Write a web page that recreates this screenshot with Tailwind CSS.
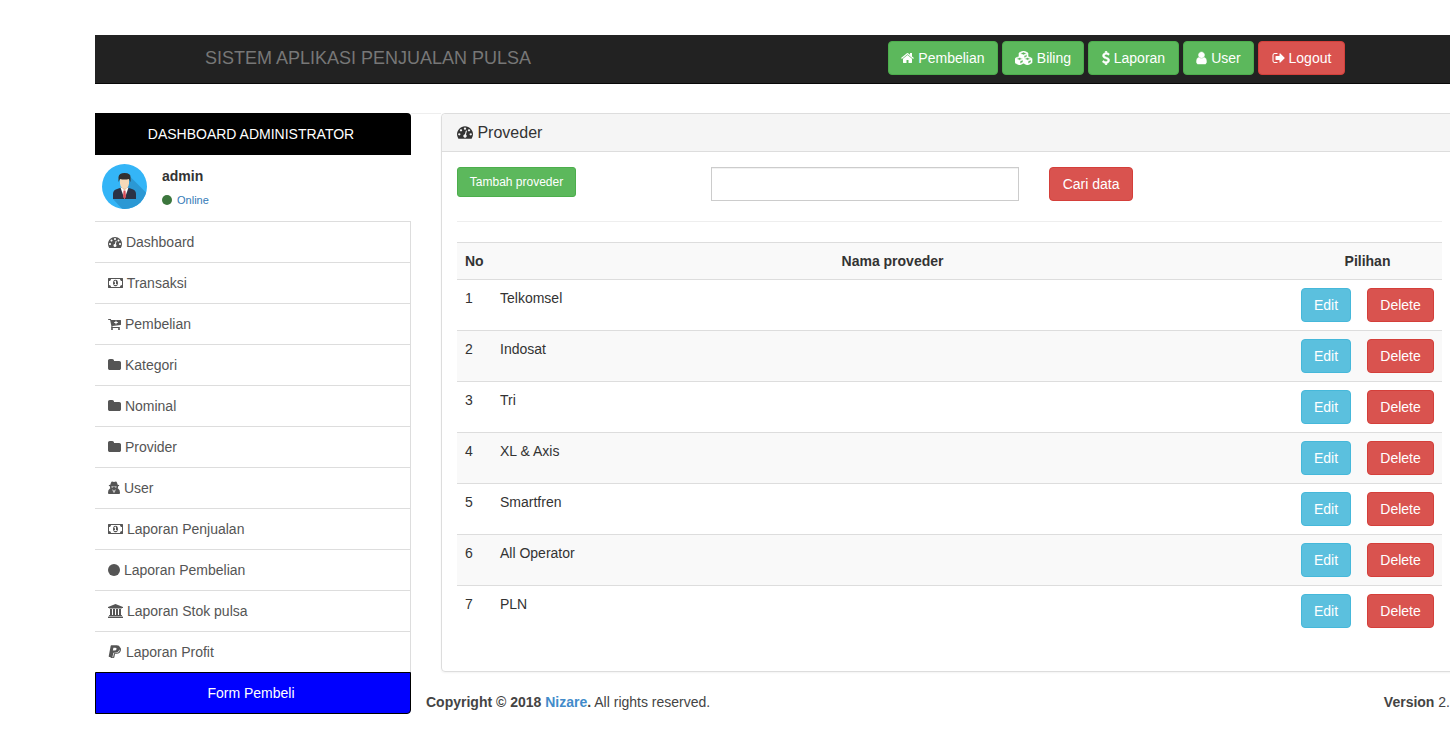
<!DOCTYPE html>
<html lang="id">
  <head>
    <meta charset="UTF-8" />
    <meta name="viewport" content="width=device-width, initial-scale=1.0" />
    <script src="https://cdn.jsdelivr.net/npm/@tailwindcss/browser@4"></script>
    <title>Sistem Aplikasi Penjualan Pulsa</title>
  </head>
  <body
    class="overflow-x-hidden bg-white pt-[35px] pl-[95px] font-['Liberation_Sans',Arial,sans-serif] text-[14px] leading-5 text-[#333]">
    <!-- icons -->
    <svg class="hidden" aria-hidden="true">
      <symbol id="home" viewBox="64 0 1664 1792"><path d="M1472 992v480q0 26-19 45t-45 19h-384v-384h-256v384h-384q-26 0-45-19t-19-45v-480q0-1 .5-3t.5-3l575-474 575 474q1 2 1 6zm223-69l-62 74q-8 9-21 11h-3q-13 0-21-7l-692-577-692 577q-12 8-24 7-13-2-21-11l-62-74q-8-10-7-23.5t11-21.5l719-599q32-26 76-26t76 26l244 204v-195q0-14 9-23t23-9h192q14 0 23 9t9 23v408l219 182q10 8 11 21.5t-7 23.5z" /></symbol>
      <symbol id="cubes" viewBox="0 0 2304 1792"><path d="M640 1632l384-192v-314l-384 164v342zm-64-454l404-173-404-173-404 173zm1088 454l384-192v-314l-384 164v342zm-64-454l404-173-404-173-404 173zm-448-293l384-165v-266l-384 164v267zm-64-379l441-189-441-189-441 189zm1088 518v416q0 36-19 67t-52 47l-448 224q-25 14-57 14t-57-14l-448-224q-4-2-7-4-2 2-7 4l-448 224q-25 14-57 14t-57-14l-448-224q-33-16-52-47t-19-67v-416q0-38 21.5-70t56.5-48l434-186v-400q0-38 21.5-70t56.5-48l448-192q23-10 50-10t50 10l448 192q35 16 56.5 48t21.5 70v400l434 186q36 16 57 48t21 70z" /></symbol>
      <symbol id="dollar" viewBox="384 0 1024 1792"><path d="M1362 1185q0 153-99.5 263.5t-258.5 136.5v175q0 14-9 23t-23 9h-135q-13 0-22.5-9.5t-9.5-22.5v-175q-66-9-127.5-31t-101.5-44.5-74-48-46.5-37.5-17.5-18q-17-21-2-41l103-135q7-10 23-12 15-2 24 9l2 2q113 99 243 125 37 8 74 8 81 0 142.5-43t61.5-122q0-28-15-53t-33.5-42-58.5-37.5-66-32-80-32.5q-39-16-61.5-25t-61.5-26.5-62.5-31-56.5-35.5-53.5-42.5-43.5-49-35.5-58-21-66.5-8.5-78q0-138 98-242t255-134v-180q0-13 9.5-22.5t22.5-9.5h135q14 0 23 9t9 23v176q57 6 110.5 23t87 33.5 63.5 37.5 39 29 15 14q17 18 5 38l-81 146q-8 15-23 16-14 3-27-7-3-3-14.5-12t-39-26.5-58.5-32-74.5-26-85.5-11.5q-95 0-155 43t-60 111q0 26 8.5 48t29.5 41.5 39.5 33 56 31 60.5 27 70 27.5q53 20 81 31.5t76 35 75.5 42.5 62 50 53 63.5 31.5 76.5 13 94z" /></symbol>
      <symbol id="user" viewBox="256 0 1280 1792"><path d="M1536 1399q0 109-62.5 187t-150.5 78h-854q-88 0-150.5-78t-62.5-187q0-85 8.5-160.5t31.5-152 58.5-131 94-89 134.5-34.5q131 128 313 128t313-128q76 0 134.5 34.5t94 89 58.5 131 31.5 152 8.5 160.5zm-256-887q0 159-112.5 271.5t-271.5 112.5-271.5-112.5-112.5-271.5 112.5-271.5 271.5-112.5 271.5 112.5 112.5 271.5z" /></symbol>
      <symbol id="sign-out" viewBox="0 0 1664 1792"><path d="M704 1440q0 4 1 20t.5 26.5-3 23.5-10 19.5-20.5 6.5h-320q-119 0-203.5-84.5t-84.5-203.5v-704q0-119 84.5-203.5t203.5-84.5h320q13 0 22.5 9.5t9.5 22.5q0 4 1 20t.5 26.5-3 23.5-10 19.5-20.5 6.5h-320q-66 0-113 47t-47 113v704q0 66 47 113t113 47h312l11.5 1 11.5 3 8 5.5 7 9 2 13.5zm928-544q0 26-19 45l-544 544q-19 19-45 19t-45-19-19-45v-288h-448q-26 0-45-19t-19-45v-384q0-26 19-45t45-19h448v-288q0-26 19-45t45-19 45 19l544 544q19 19 19 45z" /></symbol>
      <symbol id="dashboard" viewBox="0 0 1792 1792"><path d="M384 1152q0-53-37.5-90.5t-90.5-37.5-90.5 37.5-37.5 90.5 37.5 90.5 90.5 37.5 90.5-37.5 37.5-90.5zm192-448q0-53-37.5-90.5t-90.5-37.5-90.5 37.5-37.5 90.5 37.5 90.5 90.5 37.5 90.5-37.5 37.5-90.5zm428 481l101-382q6-26-7.5-48.5t-38.5-29.5-48 6.5-30 39.5l-101 382q-60 5-107 43.5t-63 98.5q-20 77 20 146t117 89 146-20 89-117q16-60-6-117t-72-91zm660-33q0-53-37.5-90.5t-90.5-37.5-90.5 37.5-37.5 90.5 37.5 90.5 90.5 37.5 90.5-37.5 37.5-90.5zm-640-640q0-53-37.5-90.5t-90.5-37.5-90.5 37.5-37.5 90.5 37.5 90.5 90.5 37.5 90.5-37.5 37.5-90.5zm448 192q0-53-37.5-90.5t-90.5-37.5-90.5 37.5-37.5 90.5 37.5 90.5 90.5 37.5 90.5-37.5 37.5-90.5zm320 448q0 261-141 483-19 29-54 29h-1402q-35 0-54-29-141-221-141-483 0-182 71-348t191-286 286-191 348-71 348 71 286 191 191 286 71 348z" /></symbol>
      <symbol id="money" viewBox="0 0 1920 1792"><path d="M768 1152h384v-96h-128v-448h-114l-148 137 77 80q42-37 55-57h2v288h-128v96zm512-256q0 70-21 142t-59.5 134-101.5 101-138 39-138-39-101.5-101-59.5-134-21-142 21-142 59.5-134 101.5-101 138-39 138 39 101.5 101 59.5 134 21 142zm512 256v-512q-106 0-181-75t-75-181h-1152q0 106-75 181t-181 75v512q106 0 181 75t75 181h1152q0-106 75-181t181-75zm128-832v1152q0 26-19 45t-45 19h-1792q-26 0-45-19t-19-45v-1152q0-26 19-45t45-19h1792q26 0 45 19t19 45z" /></symbol>
      <symbol id="cart-plus" viewBox="0 0 1664 1792"><path d="M1280 704q0-26-19-45t-45-19h-128v-128q0-26-19-45t-45-19-45 19-19 45v128h-128q-26 0-45 19t-19 45 19 45 45 19h128v128q0 26 19 45t45 19 45-19 19-45v-128h128q26 0 45-19t19-45zm-640 832q0 53-37.5 90.5t-90.5 37.5-90.5-37.5-37.5-90.5 37.5-90.5 90.5-37.5 90.5 37.5 37.5 90.5zm896 0q0 53-37.5 90.5t-90.5 37.5-90.5-37.5-37.5-90.5 37.5-90.5 90.5-37.5 90.5 37.5 37.5 90.5zm128-1088v512q0 24-16 42.5t-41 21.5l-1044 122q1 7 4.5 21.5t6 26.5 2.5 22q0 16-24 64h920q26 0 45 19t19 45-19 45-45 19h-1024q-26 0-45-19t-19-45q0-14 11-39.5t29.5-59.5 20.5-38l-177-823h-204q-26 0-45-19t-19-45 19-45 45-19h256q16 0 28.5 6.5t20 15.5 13 24.5 7.5 26.5 5.5 29.5 4.5 25.5h1201q26 0 45 19t19 45z" /></symbol>
      <symbol id="folder" viewBox="64 0 1664 1792"><path d="M1728 608v704q0 92-66 158t-158 66h-1216q-92 0-158-66t-66-158v-960q0-92 66-158t158-66h320q92 0 158 66t66 158v32h672q92 0 158 66t66 158z" /></symbol>
      <symbol id="user-secret" viewBox="0 0 1536 1792"><path fill-rule="evenodd" d="M300 470C340 330 400 64 540 64q90 0 228 70 138-70 228-70c140 0 200 266 240 406q210 40 210 100 0 70-160 110 30 150-50 260l90 40q210 120 210 520v36q0 128-120 128H120Q0 1664 0 1536v-36q0-400 210-520l90-40q-80-110-50-260-160-40-160-110 0-60 210-100zM430 690q-10 100 80 130 150 20 200-80h116q50 100 200 80 90-30 80-130-338 40-676 0zM560 1060l130 500 40-290-50-120zM976 1060l-120 90-50 120 40 290z" /></symbol>
      <symbol id="circle" viewBox="0 0 1536 1792"><circle cx="768" cy="896" r="768" /></symbol>
      <symbol id="bank" viewBox="0 0 1920 1792"><path d="M960 0l960 384v128h-128q0 26-20.5 45t-48.5 19h-1526q-28 0-48.5-19t-20.5-45h-128v-128zm-704 640h256v768h128v-768h256v768h128v-768h256v768h128v-768h256v768h59q28 0 48.5 19t20.5 45v64h-1664v-64q0-26 20.5-45t48.5-19h59v-768zm1595 960q28 0 48.5 19t20.5 45v128h-1920v-128q0-26 20.5-45t48.5-19h1782z" /></symbol>
      <symbol id="paypal" viewBox="0 0 1792 1792"><path fill-rule="evenodd" d="M420 40h720q330 20 390 240 160 110 130 350-70 470-560 500H900l-80 400q-20 130-130 130H380q-70 0-60-80l10-60H160q-80 0-70-80L340 120q15-80 80-80zM690 340l-70 370h190q250 0 290-200 20-170-190-170zM1450 560q-120 400-580 420H690l-110 520-20 70h90l100-440q20-100 120-100h170q380 0 450-350 10-60-40-120z" /></symbol>
    </svg>

    <!-- navbar -->
    <nav
      class="flex items-center justify-between border-b border-[#080808] bg-[#222] pt-1.5 pr-[105px] pb-2 pl-[110px]">
      <a href="#" class="text-[18px] text-[#777]">SISTEM APLIKASI PENJUALAN PULSA</a>
      <div class="flex gap-1 text-center text-white">
        <a href="#" class="w-[110px] rounded border border-[#4cae4c] bg-[#5cb85c] py-1.5">
          <svg class="inline h-[14px] w-[13px] fill-current align-[-2px]"><use href="#home" /></svg>
          Pembelian
        </a>
        <a href="#" class="w-[82px] rounded border border-[#4cae4c] bg-[#5cb85c] py-1.5">
          <svg class="inline h-[14px] w-[18px] fill-current stroke-current stroke-[80] align-[-2px]"><use href="#cubes" /></svg>
          Biling
        </a>
        <a href="#" class="w-[91px] rounded border border-[#4cae4c] bg-[#5cb85c] py-1.5">
          <svg class="inline h-[14px] w-[8px] fill-current stroke-current stroke-[60] align-[-2px]"><use href="#dollar" /></svg>
          Laporan
        </a>
        <a href="#" class="w-[71px] rounded border border-[#4cae4c] bg-[#5cb85c] py-1.5">
          <svg class="inline h-[14px] w-[11px] fill-current stroke-current stroke-[60] align-[-2px]"><use href="#user" /></svg>
          User
        </a>
        <a href="#" class="w-[87px] rounded border border-[#d43f3a] bg-[#d9534f] py-1.5">
          <svg class="inline h-[14px] w-[13px] fill-current align-[-2px]"><use href="#sign-out" /></svg>
          Logout
        </a>
      </div>
    </nav>

    <div class="mt-[29px] flex items-start">
      <!-- sidebar -->
      <aside class="w-[316px] shrink-0">
        <h2 class="rounded-tr bg-black py-[11px] pr-1 text-center text-white">
          DASHBOARD ADMINISTRATOR
        </h2>
        <div class="flex gap-[15px] pt-[9px] pb-[11px] pl-[7px]">
          <svg class="size-[45px]" viewBox="0 0 90 90" role="img" aria-label="admin">
            <clipPath id="round"><circle cx="45" cy="45" r="45" /></clipPath>
            <g clip-path="url(#round)">
              <path fill="#34b5f7" d="M0 0h90v90H0z" />
              <path fill="#2b98d4" d="M55 24l40 40v31H45L22 70z" />
              <path fill="#2b3245" d="M22 70V60q0-8 8-10l9-3h12l9 3q8 2 8 10v10z" />
              <path fill="#fff" d="M37 47l8 23 8-23z" />
              <path fill="#e8c3a0" d="M40 40h10v8l-5 5-5-5z" />
              <path fill="#d8505a" d="M43 53h4l1 13-3 4-3-4z" />
              <path fill="#f6d9b8" d="M36 29h18v10q-1 10-9 10t-9-10z" />
              <path fill="#33302f" d="M33 36V26q1-8 12-8 13 0 12 9v9l-3-6q-9 2-18 0z" />
            </g>
          </svg>
          <div class="pt-0.5">
            <p class="font-bold">admin</p>
            <a href="#" class="block pt-1 text-[11px] leading-5 text-[#337ab7]">
              <svg class="mr-0.5 inline h-[12px] w-[10px] fill-[#3c763d] align-[-2px]"><use href="#circle" /></svg>
              Online
            </a>
          </div>
        </div>
        <ul class="divide-y divide-[#ddd] border-t border-r border-[#ddd] text-[#555]">
          <li><a href="#" class="block py-2.5 pl-[13px]"><svg class="inline h-[14px] w-[14px] fill-current align-[-2px]"><use href="#dashboard" /></svg> Dashboard</a></li>
          <li><a href="#" class="block py-2.5 pl-[13px]"><svg class="inline h-[14px] w-[15px] fill-current align-[-2px]"><use href="#money" /></svg> Transaksi</a></li>
          <li><a href="#" class="block py-2.5 pl-[13px]"><svg class="inline h-[14px] w-[13px] fill-current align-[-2px]"><use href="#cart-plus" /></svg> Pembelian</a></li>
          <li><a href="#" class="block py-2.5 pl-[13px]"><svg class="inline h-[14px] w-[13px] fill-current align-[-2px]"><use href="#folder" /></svg> Kategori</a></li>
          <li><a href="#" class="block py-2.5 pl-[13px]"><svg class="inline h-[14px] w-[13px] fill-current align-[-2px]"><use href="#folder" /></svg> Nominal</a></li>
          <li><a href="#" class="block py-2.5 pl-[13px]"><svg class="inline h-[14px] w-[13px] fill-current align-[-2px]"><use href="#folder" /></svg> Provider</a></li>
          <li><a href="#" class="block py-2.5 pl-[13px]"><svg class="inline h-[14px] w-[12px] fill-current align-[-2px]"><use href="#user-secret" /></svg> User</a></li>
          <li><a href="#" class="block py-2.5 pl-[13px]"><svg class="inline h-[14px] w-[15px] fill-current align-[-2px]"><use href="#money" /></svg> Laporan Penjualan</a></li>
          <li><a href="#" class="block py-2.5 pl-[13px]"><svg class="inline h-[14px] w-[12px] fill-current align-[-2px]"><use href="#circle" /></svg> Laporan Pembelian</a></li>
          <li><a href="#" class="block py-2.5 pl-[13px]"><svg class="inline h-[14px] w-[15px] fill-current align-[-2px]"><use href="#bank" /></svg> Laporan Stok pulsa</a></li>
          <li><a href="#" class="block py-2.5 pl-[13px]"><svg class="inline h-[14px] w-[14px] fill-current align-[-2px]"><use href="#paypal" /></svg> Laporan Profit</a></li>
        </ul>
        <a
          href="#"
          class="block rounded-br border border-black bg-[#00f] py-2.5 pr-1 text-center text-white">Form Pembeli</a>
      </aside>

      <div class="h-px w-[30px] shrink-0 bg-[#eee]"></div>

      <!-- content -->
      <div class="min-w-0 flex-1">
        <main class="-mr-2 rounded border border-[#ddd] shadow-xs">
          <h1
            class="rounded-t border-b border-[#ddd] bg-[#f5f5f5] px-[15px] py-2.5 text-[16px] leading-[17px]">
            <svg class="inline h-[16px] w-[16px] fill-current align-[-2px]"><use href="#dashboard" /></svg>
            Proveder
          </h1>
          <div class="px-[15px] pt-[15px] pb-[35px]">
            <form class="-mx-[15px] grid grid-cols-12 items-start">
              <div class="col-span-3 px-[15px]">
                <button
                  type="button"
                  class="block w-[119px] rounded-[3px] border border-[#4cae4c] bg-[#5cb85c] py-[5px] text-[12px] leading-[18px] text-white">
                  Tambah proveder
                </button>
              </div>
              <div class="col-span-4 px-[15px]">
                <input
                  type="text"
                  aria-label="Cari proveder"
                  class="block h-[34px] w-full border border-[#ccc] px-3 inset-shadow-2xs" />
              </div>
              <div class="col-span-5 px-[15px]">
                <button
                  type="submit"
                  class="block w-[84px] rounded border border-[#d43f3a] bg-[#d9534f] py-1.5 text-white">
                  Cari data
                </button>
              </div>
            </form>
            <hr class="my-5 border-[#eee]" />
            <table class="w-full table-fixed border-separate border-spacing-0">
              <colgroup>
                <col class="w-[35px]" />
                <col />
                <col class="w-[149px]" />
              </colgroup>
              <thead class="bg-[#f9f9f9]">
                <tr>
                  <th class="border-t border-[#ddd] py-2 pl-2 text-left">No</th>
                  <th class="border-t border-[#ddd] p-2">Nama proveder</th>
                  <th class="border-t border-[#ddd] p-2">Pilihan</th>
                </tr>
              </thead>
              <tbody id="proveder"></tbody>
            </table>
          </div>
        </main>
        <footer class="-ml-[15px] flex justify-between pt-5 text-[#444]">
          <p>
            <b>Copyright © 2018 <a href="#" class="text-[#428bca]">Nizare</a>.</b>
            All rights reserved.
          </p>
          <p><b>Version</b> 2.</p>
        </footer>
      </div>
    </div>

    <script>
      const proveder = ["Telkomsel", "Indosat", "Tri", "XL & Axis", "Smartfren", "All Operator", "PLN"];

      document.getElementById("proveder").innerHTML = proveder
        .map(
          (nama, i) => `
          <tr class="align-top even:bg-[#f9f9f9]">
            <td class="border-t border-[#ddd] p-2">${i + 1}</td>
            <td class="border-t border-[#ddd] p-2">${nama.replace("&", "&amp;")}</td>
            <td class="border-t border-[#ddd] p-2">
              <div class="flex justify-between text-white">
                <button type="button" class="w-[50px] rounded border border-[#46b8da] bg-[#5bc0de] py-1.5">Edit</button>
                <button type="button" class="w-[67px] rounded border border-[#d43f3a] bg-[#d9534f] py-1.5">Delete</button>
              </div>
            </td>
          </tr>`
        )
        .join("");
    </script>
  </body>
</html>
